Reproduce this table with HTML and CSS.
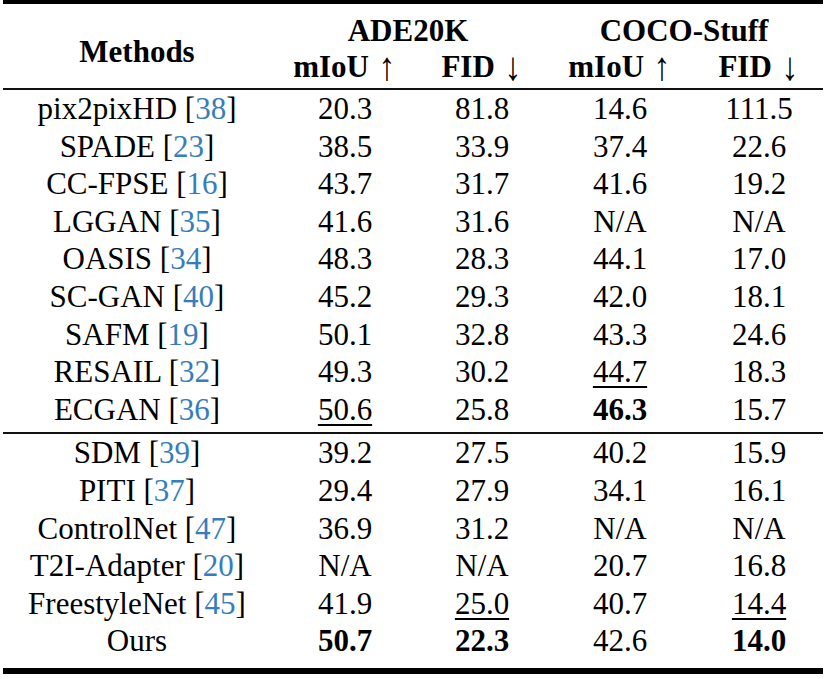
FILE: index.html
```html
<!DOCTYPE html>
<html lang="en">
<head>
<meta charset="utf-8">
<title>Comparison table</title>
<link rel="stylesheet" href="styles.css">
</head>
<body>
<table class="results">
  <colgroup>
    <col class="c-method">
    <col class="c-miou">
    <col class="c-fid">
    <col class="c-miou2">
    <col class="c-fid2">
  </colgroup>
  <thead>
    <tr class="h1">
      <th class="methods" rowspan="2">Methods</th>
      <th colspan="2">ADE20K</th>
      <th colspan="2">COCO-Stuff</th>
    </tr>
    <tr class="h2">
      <th>mIoU <span class="arr">↑</span></th>
      <th>FID <span class="arr">↓</span></th>
      <th>mIoU <span class="arr">↑</span></th>
      <th>FID <span class="arr">↓</span></th>
    </tr>
  </thead>
  <tbody>
    <tr><td>pix2pixHD [<span class="cite">38</span>]</td><td>20.3</td><td>81.8</td><td>14.6</td><td>111.5</td></tr>
    <tr><td>SPADE [<span class="cite">23</span>]</td><td>38.5</td><td>33.9</td><td>37.4</td><td>22.6</td></tr>
    <tr><td>CC-FPSE [<span class="cite">16</span>]</td><td>43.7</td><td>31.7</td><td>41.6</td><td>19.2</td></tr>
    <tr><td>LGGAN [<span class="cite">35</span>]</td><td>41.6</td><td>31.6</td><td>N/A</td><td>N/A</td></tr>
    <tr><td>OASIS [<span class="cite">34</span>]</td><td>48.3</td><td>28.3</td><td>44.1</td><td>17.0</td></tr>
    <tr><td>SC-GAN [<span class="cite">40</span>]</td><td>45.2</td><td>29.3</td><td>42.0</td><td>18.1</td></tr>
    <tr><td>SAFM [<span class="cite">19</span>]</td><td>50.1</td><td>32.8</td><td>43.3</td><td>24.6</td></tr>
    <tr><td>RESAIL [<span class="cite">32</span>]</td><td>49.3</td><td>30.2</td><td><span class="ul">44.7</span></td><td>18.3</td></tr>
    <tr class="group-end"><td>ECGAN [<span class="cite">36</span>]</td><td><span class="ul">50.6</span></td><td>25.8</td><td><b>46.3</b></td><td>15.7</td></tr>
    <tr><td>SDM [<span class="cite">39</span>]</td><td>39.2</td><td>27.5</td><td>40.2</td><td>15.9</td></tr>
    <tr><td>PITI [<span class="cite">37</span>]</td><td>29.4</td><td>27.9</td><td>34.1</td><td>16.1</td></tr>
    <tr><td>ControlNet [<span class="cite">47</span>]</td><td>36.9</td><td>31.2</td><td>N/A</td><td>N/A</td></tr>
    <tr><td>T2I-Adapter [<span class="cite">20</span>]</td><td>N/A</td><td>N/A</td><td>20.7</td><td>16.8</td></tr>
    <tr><td>FreestyleNet [<span class="cite">45</span>]</td><td>41.9</td><td><span class="ul">25.0</span></td><td>40.7</td><td><span class="ul">14.4</span></td></tr>
    <tr class="last"><td>Ours</td><td><b>50.7</b></td><td><b>22.3</b></td><td>42.6</td><td><b>14.0</b></td></tr>
  </tbody>
</table>
</body>
</html>
```

FILE: styles.css
```css
html, body {
  margin: 0;
  padding: 0;
  background: #ffffff;
}

body {
  font-family: "Liberation Serif", "Times New Roman", serif;
  font-size: 31px;
  color: #000000;
}

.results {
  margin-left: 3px;
  width: 820px;
  table-layout: fixed;
  border-collapse: separate;
  border-spacing: 0;
  border-top: 4px solid #000;
  border-bottom: 6px solid #000;
}

.c-method { width: 268px; }
.c-miou { width: 148px; }
.c-fid { width: 126px; }
.c-miou2 { width: 150px; }
.c-fid2 { width: 128px; }

th, td {
  text-align: center;
  padding: 0;
  white-space: nowrap;
}

th {
  font-weight: bold;
  line-height: 31px;
}

.h1 th {
  padding-top: 11px;
  padding-bottom: 5px;
}

.h2 th {
  padding-bottom: 6px;
  border-bottom: 2px solid #111;
}

.h1 th.methods {
  padding-top: 16px;
  padding-bottom: 6px;
  vertical-align: middle;
  border-bottom: 2px solid #111;
}

.arr {
  font-weight: normal;
  font-size: 40px;
  line-height: 0;
  display: inline-block;
  transform: scaleX(0.85) translateY(3px);
}

td {
  line-height: 37.6px;
  height: 37.6px;
}

.group-end td {
  padding-bottom: 4px;
  border-bottom: 2px solid #111;
}

.last td {
  padding-bottom: 8px;
}

.cite {
  color: #367dbd;
}

.ul {
  text-decoration: underline;
  text-decoration-thickness: 1.5px;
  text-underline-offset: 4px;
}

b {
  font-weight: bold;
}
```
